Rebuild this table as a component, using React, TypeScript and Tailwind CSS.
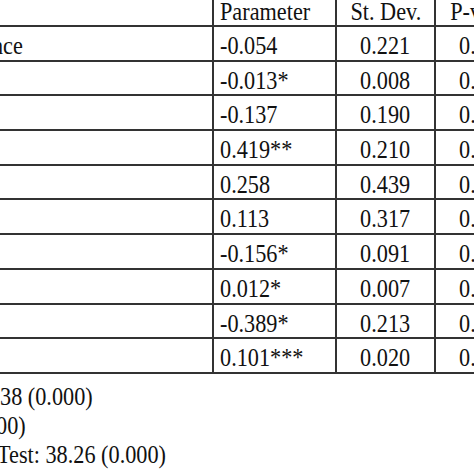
import React from "react";

type Row = {
  label: string;
  param: string;
  sd: string;
  p: string;
};

const rows: Row[] = [
  { label: "ance", param: "-0.054", sd: "0.221", p: "0.807" },
  { label: "", param: "-0.013*", sd: "0.008", p: "0.093" },
  { label: "", param: "-0.137", sd: "0.190", p: "0.471" },
  { label: "", param: "0.419**", sd: "0.210", p: "0.046" },
  { label: "", param: "0.258", sd: "0.439", p: "0.557" },
  { label: "", param: "0.113", sd: "0.317", p: "0.721" },
  { label: "", param: "-0.156*", sd: "0.091", p: "0.086" },
  { label: "", param: "0.012*", sd: "0.007", p: "0.086" },
  { label: "", param: "-0.389*", sd: "0.213", p: "0.068" },
  { label: "", param: "0.101***", sd: "0.020", p: "0.000" },
];

// glyphs in the scan are a touch narrower than Times at this height
function T({ children, center }: { children: React.ReactNode; center?: boolean }) {
  return (
    <span
      className={`inline-block whitespace-nowrap scale-x-[0.89] ${center ? "origin-center" : "origin-left"}`}
    >
      {children}
    </span>
  );
}

function TableRow({ cells, header }: { cells: Row; header?: boolean }) {
  return (
    <div
      className={`flex border-b-2 border-[#333] ${header ? "h-[34px]" : "h-[34.7px]"}`}
    >
      <div className="w-[212px] shrink-0 pt-[7px] whitespace-nowrap">
        {cells.label && (
          <span className="-ml-[18px] inline-block">
            <T>{cells.label}</T>
          </span>
        )}
      </div>
      <div className="w-[123px] shrink-0 border-l-2 border-[#333] pt-[7px] pl-[6px]">
        <T>{cells.param}</T>
      </div>
      <div className="w-[99px] shrink-0 border-l-2 border-[#333] pt-[7px] text-center">
        <T center>{cells.sd}</T>
      </div>
      <div className="w-[99px] shrink-0 border-l-2 border-[#333] pt-[7px] text-center">
        <T center>{cells.p}</T>
      </div>
    </div>
  );
}

export default function App() {
  return (
    <div
      className="w-[474px] h-[474px] overflow-hidden bg-white text-[#111] text-[25px] leading-[24px]"
      style={{ fontFamily: '"Liberation Serif", "Times New Roman", serif' }}
    >
      <div className="w-[534px] -mt-[7px]">
        <TableRow header cells={{ label: "", param: "Parameter", sd: "St. Dev.", p: "P-value" }} />
        {rows.map((r, i) => (
          <TableRow key={i} cells={r} />
        ))}
      </div>

      <div className="mt-[8px] leading-[29px]">
        <div>
          <T>38 (0.000)</T>
        </div>
        <div className="-ml-[4px]">
          <T>00)</T>
        </div>
        <div className="-ml-[3px]">
          <T>Test: 38.26 (0.000)</T>
        </div>
      </div>
    </div>
  );
}
